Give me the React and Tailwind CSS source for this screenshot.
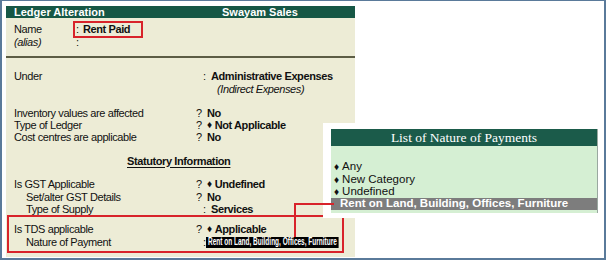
import React from 'react';

const Diamond = () => <span className="mr-[3px] inline-block text-[10px] leading-none align-[1px]">♦</span>;

const Row = ({ label, indent, mark = '?', h = 'h-[12px]', extra = '', children }) => {
  return (
    <div className={`flex items-center ${h} ${extra}`}>
      <div className={`w-[182px] shrink-0 ${indent ? 'pl-[12px]' : ''}`}>{label}</div>
      {mark === '?' ? (
        <span className="w-[11px] shrink-0">?</span>
      ) : (
        <span className="w-[15px] shrink-0 pl-[7px]">:</span>
      )}
      <div className="font-bold whitespace-nowrap">{children}</div>
    </div>
  );
};

const App = () => {
  return (
    <div className="w-[606px] h-[262px] bg-white font-['Liberation_Sans',Arial,sans-serif] text-[11px] leading-none tracking-[-0.4px] text-[#111]">
      <div className="relative h-[260px] border-t border-l-2 border-r-2 border-b-2 border-[#5a7a9a] pl-[4px] pt-[5px] pb-[1px]">
        {/* Ledger panel */}
        <div className="w-[349px] h-[251px] bg-[#edecd6]">
          <div className="flex h-[12px] items-center bg-[#165745] text-[11px] font-bold text-white tracking-normal">
            <span className="w-[216px] pl-[8px]">Ledger Alteration</span>
            <span>Swayam Sales</span>
          </div>

          <div className="pl-[8px]">
            <div className="mt-[3px] flex h-[17px] items-center">
              <div className="w-[59px]">Name</div>
              <div className="flex h-[17px] w-[70px] items-center border-2 border-[#d8232a] pl-[1px]">
                <span className="w-[7px]">:</span>
                <span className="font-bold">Rent Paid</span>
              </div>
            </div>
            <div className="-mt-[2px] flex h-[12px] items-center">
              <div className="w-[62px] italic">(alias)</div>
              <span>:</span>
            </div>
          </div>

          <div className="mt-[8px] h-[2px] bg-[#5d5d45]" />

          <div className="pl-[8px]">
            <Row label="Under" mark=":" h="h-[13px]" extra="mt-[12px]">Administrative Expenses</Row>
            <div className="flex h-[13px] items-center pl-[203px] italic">(Indirect Expenses)</div>

            <Row label="Inventory values are affected" extra="mt-[11px]">No</Row>
            <Row label="Type of Ledger"><Diamond />Not Applicable</Row>
            <Row label="Cost centres are applicable">No</Row>

            <div className="mt-[12px] flex h-[12px] items-center pl-[113px]">
              <span className="font-bold underline underline-offset-[2px]">Statutory Information</span>
            </div>

            <Row label="Is GST Applicable" extra="mt-[11px]"><Diamond />Undefined</Row>
            <Row label="Set/alter GST Details" indent extra="mt-[1px]">No</Row>
            <Row label="Type of Supply" indent mark=":">Services</Row>

            <div className="-ml-[7px] w-[337px] border-2 border-[#d8232a] pl-[5px] pt-[6px] pb-[3px]">
              <Row label="Is TDS applicable"><Diamond />Applicable</Row>
              <div className="mt-[1px] flex h-[12px] items-center">
                <div className="w-[182px] shrink-0 pl-[12px]">Nature of Payment</div>
                <span className="w-[10px] shrink-0 pl-[7px]">:</span>
                <span className="inline-flex h-[11px] origin-left scale-x-[0.65] items-center bg-black px-[3px] text-[10px] font-bold tracking-normal text-white whitespace-nowrap">
                  Rent on Land, Building, Offices, Furniture
                </span>
              </div>
            </div>
          </div>
        </div>

        {/* Popup list */}
        <div className="absolute left-[321px] top-[122px] h-[95px] w-[280px] bg-white pl-[8px] pt-[6px]">
          <div className="flex h-[84px] w-[267px] flex-col border-r border-[#9aa8a0] bg-[#d5efd3] text-[11.5px] tracking-normal">
            <div className="flex h-[17px] items-center justify-center bg-[#1b5b4a] font-['Liberation_Serif',serif] text-[13.5px] text-white">
              List of Nature of Payments
            </div>
            <div className="mt-[15px] flex h-[12px] items-center pl-[3px]"><Diamond />Any</div>
            <div className="mt-[1px] flex h-[12px] items-center pl-[3px]"><Diamond />New Category</div>
            <div className="flex h-[12px] items-center pl-[3px]"><Diamond />Undefined</div>
            <div className="flex h-[12px] items-center bg-[#7d7d7d] pl-[9px] text-[11.5px] font-bold text-white">
              Rent on Land, Building, Offices, Furniture
            </div>
          </div>
        </div>

        {/* connector */}
        <div className="absolute left-[292px] top-[202px] h-[2px] w-[40px] bg-[#d8232a]" />
        <div className="absolute left-[292px] top-[202px] h-[34px] w-[2px] bg-[#d8232a]" />
      </div>
    </div>
  );
};

export default App;
